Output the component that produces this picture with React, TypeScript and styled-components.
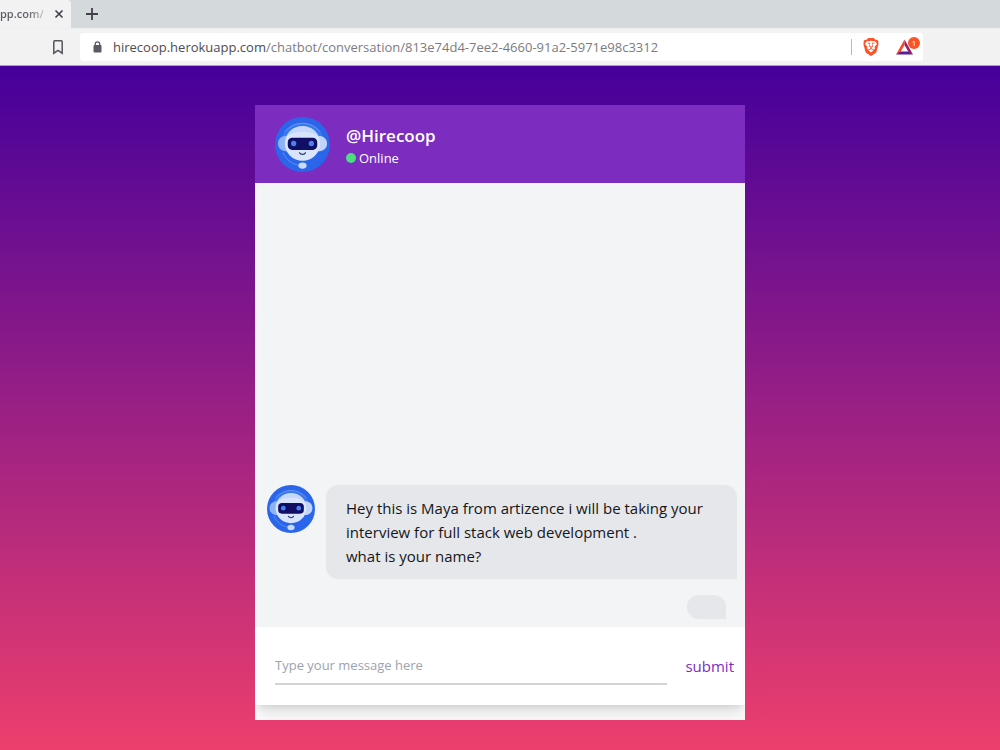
import React from "react";
import styled, { createGlobalStyle } from "styled-components";
import { SiBrave } from "react-icons/si";

const GlobalStyle = createGlobalStyle`
  *, *::before, *::after { box-sizing: border-box; }
  body {
    margin: 0;
    font-family: "Open Sans", "Noto Sans", sans-serif;
    color: #161618;
  }
  button, input { font: inherit; }
`;

const Screen = styled.div`
  display: flex;
  flex-direction: column;
  min-height: 100vh;
`;

const TabStrip = styled.div`
  display: flex;
  align-items: stretch;
  height: 28px;
  background: #d4d9dc;
`;

const Tab = styled.div`
  display: flex;
  align-items: center;
  gap: 8px;
  width: 71px;
  padding-right: 7px;
  border-top-right-radius: 4px;
  background: #f2f2f2;
`;

const TabTitle = styled.span`
  flex: 1;
  overflow: hidden;
  white-space: nowrap;
  font-size: 11px;
  font-weight: 600;
  line-height: 16px;
  background: linear-gradient(90deg, #5c5c64 60%, rgba(92, 92, 100, 0.2) 100%);
  background-clip: text;
  color: transparent;
`;

const IconButton = styled.button`
  display: flex;
  align-items: center;
  justify-content: center;
  padding: 0;
  border: 0;
  background: none;
  color: #404048;
  cursor: pointer;
`;

const NewTabButton = styled(IconButton)`
  margin-left: 14px;
`;

const Toolbar = styled.div`
  display: flex;
  align-items: center;
  gap: 16px;
  height: 38px;
  padding: 0 77px 0 52px;
  border-top: 1px solid #eceeef;
  border-bottom: 1px solid #a5a5ad;
  background: #f2f2f2;
`;

const AddressBar = styled.div`
  display: flex;
  flex: 1;
  align-items: center;
  height: 28px;
  padding: 0 2px 0 12px;
  border-radius: 3px;
  background: #fff;
  color: #5a5a62;
`;

const Address = styled.div`
  flex: 1;
  margin-left: 10px;
  overflow: hidden;
  white-space: nowrap;
  font-size: 13px;
  line-height: 20px;
  color: #7c7c80;
`;

const Host = styled.span`
  color: #4c4c54;
`;

const Divider = styled.span`
  width: 1px;
  height: 16px;
  margin-right: 10px;
  background: #b8b8c4;
`;

const Extensions = styled.div`
  display: flex;
  align-items: center;
  gap: 15px;
  color: #fb542b;
`;

const Page = styled.main`
  display: flex;
  flex: 1;
  flex-direction: column;
  align-items: center;
  padding: 39px 16px 30px;
  background: linear-gradient(#45009b, #ed3f6d);
`;

const Card = styled.section`
  display: flex;
  flex: 1;
  flex-direction: column;
  width: 100%;
  max-width: 490px;
  padding-bottom: 15px;
  overflow: hidden;
  background: #fcfcfc;
`;

const CardHeader = styled.header`
  display: flex;
  align-items: center;
  gap: 16px;
  height: 78px;
  padding: 0 20px;
  background: #7c2cbf;
  color: #fff;
`;

const Identity = styled.div`
  padding-top: 3px;
`;

const Name = styled.h1`
  margin: 0;
  font-size: 17px;
  font-weight: 600;
  line-height: 24px;
`;

const Status = styled.div`
  display: flex;
  align-items: center;
  gap: 3px;
  font-size: 13px;
  line-height: 20px;
`;

const StatusDot = styled.span`
  width: 10px;
  height: 10px;
  border-radius: 50%;
  background: #4ade80;
`;

const Messages = styled.div`
  display: flex;
  flex: 1;
  flex-direction: column;
  justify-content: flex-end;
  gap: 16px;
  padding: 16px 8px 8px 12px;
  background: #f3f4f6;
`;

const MessageRow = styled.div`
  display: flex;
  align-items: flex-start;
  gap: 11px;
`;

const Bubble = styled.p`
  flex: 1;
  margin: 0;
  padding: 11px 20px;
  border-radius: 12px 12px 0 12px;
  background: #e5e7eb;
  font-size: 15px;
  line-height: 24px;
`;

const EmptyBubble = styled.div`
  align-self: flex-end;
  width: 39px;
  height: 24px;
  margin-right: 11px;
  border-radius: 12px 12px 0 12px;
  background: #e5e7eb;
`;

const Composer = styled.form`
  display: flex;
  align-items: center;
  gap: 18px;
  height: 78px;
  padding: 0 11px 0 20px;
  background: #fff;
  box-shadow: 0 10px 15px -3px rgba(0, 0, 0, 0.13), 0 4px 6px -2px rgba(0, 0, 0, 0.07);
`;

const MessageInput = styled.input`
  flex: 1;
  min-width: 0;
  height: 38px;
  padding: 0;
  border: 0;
  border-bottom: 2px solid #d1d5db;
  outline: 0;
  background: transparent;
  font-size: 13px;

  &::placeholder {
    color: #9ca3af;
    opacity: 1;
  }
`;

const SubmitButton = styled.button`
  padding: 0;
  border: 0;
  background: none;
  color: #7c2cbf;
  font-size: 15px;
  line-height: 24px;
  cursor: pointer;
`;

const BotAvatar = ({ size }: { size: number }) => (
  <svg width={size} height={size} viewBox="0 0 56 56" role="img" aria-label="Bot avatar">
    <circle cx="28" cy="28" r="28" fill="#2b66ea" />
    <path d="M7 20a23 23 0 0 1 42 0L44 20a18 18 0 0 0-32 0z" fill="#3b78ee" />
    <path d="M10 15a23 23 0 0 1 36 0" fill="none" stroke="#6b9bf5" strokeWidth="1" />
    <path d="M8 36c3 7 9 12 16 13" fill="none" stroke="#5b91f4" strokeWidth="1" />
    <path d="M12 19C7 19 3 22 3 27s4 8 9 8z" fill="#8fb2f7" />
    <path d="M44 19c5 0 9 3 9 8s-4 8-9 8z" fill="#c0d4fb" />
    <ellipse cx="28" cy="27" rx="18" ry="17.500" fill="#d9e5fc" />
    <path d="M12 19a18 17.500 0 0 1 32 0q-16-8-32 0z" fill="#c6d8fa" />
    <rect x="13" y="21" width="30" height="12.500" rx="4.500" fill="#110e66" />
    <circle cx="19" cy="27" r="2.700" fill="#4a82ef" />
    <circle cx="37" cy="27" r="2.700" fill="#4a82ef" />
    <path d="M25 36.500c1 2.200 5 2.200 6 0" fill="none" stroke="#28327e" strokeWidth="1.300" strokeLinecap="round" />
    <ellipse cx="28" cy="49.500" rx="4.200" ry="3.200" fill="#c9dafb" />
  </svg>
);

const CloseIcon = () => (
  <svg width="10" height="10" viewBox="0 0 10 10" aria-hidden="true">
    <path d="M1.500 1.500l7 7M8.500 1.500l-7 7" stroke="currentColor" strokeWidth="1.600" />
  </svg>
);

const PlusIcon = () => (
  <svg width="14" height="14" viewBox="0 0 14 14" aria-hidden="true">
    <path d="M7 1v12M1 7h12" stroke="currentColor" strokeWidth="1.800" />
  </svg>
);

const BookmarkIcon = () => (
  <svg width="12" height="16" viewBox="0 0 12 16" aria-hidden="true">
    <path
      d="M1.800 2.700q0-.9.900-.9h6.600q.9 0 .9.900v11.500L6 11.300l-4.200 2.900z"
      fill="none"
      stroke="#55555e"
      strokeWidth="1.500"
    />
  </svg>
);

const LockIcon = () => (
  <svg width="11" height="14" viewBox="0 0 11 14" aria-hidden="true">
    <path d="M3.300 6V4a2.200 2.200 0 0 1 4.400 0v2" fill="none" stroke="currentColor" strokeWidth="1.300" />
    <rect x="1.500" y="5" width="8" height="7.500" rx="1" fill="currentColor" />
  </svg>
);

const RewardsIcon = () => (
  <svg width="26" height="20" viewBox="0 0 26 20" role="img" aria-label="Rewards, 1 new">
    <path d="M9.500 2.500L1 17.500l4.500-2.500 4-7z" fill="#ff4724" />
    <path d="M9.500 2.500l8.500 15-4.500-2.500-4-7z" fill="#9e1f63" />
    <path d="M1 17.500h17L13.500 14.500h-8z" fill="#5a1f96" />
    <circle cx="19" cy="6" r="6" fill="#fb542b" />
    <text x="19" y="9" textAnchor="middle" fontSize="8" fill="#fff">
      1
    </text>
  </svg>
);

export default function App() {
  return (
    <Screen>
      <GlobalStyle />
      <TabStrip>
        <Tab>
          <TabTitle>pp.com/</TabTitle>
          <IconButton type="button" aria-label="Close tab">
            <CloseIcon />
          </IconButton>
        </Tab>
        <NewTabButton type="button" aria-label="New tab">
          <PlusIcon />
        </NewTabButton>
      </TabStrip>
      <Toolbar>
        <IconButton type="button" aria-label="Bookmark this page">
          <BookmarkIcon />
        </IconButton>
        <AddressBar>
          <LockIcon />
          <Address>
            <Host>hirecoop.herokuapp.com</Host>/chatbot/conversation/813e74d4-7ee2-4660-91a2-5971e98c3312
          </Address>
          <Divider />
          <Extensions>
            <SiBrave size={18} aria-label="Brave Shields" />
            <RewardsIcon />
          </Extensions>
        </AddressBar>
      </Toolbar>
      <Page>
        <Card>
          <CardHeader>
            <BotAvatar size={55} />
            <Identity>
              <Name>@Hirecoop</Name>
              <Status>
                <StatusDot />
                Online
              </Status>
            </Identity>
          </CardHeader>
          <Messages>
            <MessageRow>
              <BotAvatar size={48} />
              <Bubble>
                Hey this is Maya from artizence i will be taking your interview for full stack web development .
                <br />
                what is your name?
              </Bubble>
            </MessageRow>
            <EmptyBubble />
          </Messages>
          <Composer onSubmit={(event) => event.preventDefault()}>
            <MessageInput type="text" aria-label="Message" placeholder="Type your message here" />
            <SubmitButton type="submit">submit</SubmitButton>
          </Composer>
        </Card>
      </Page>
    </Screen>
  );
}
